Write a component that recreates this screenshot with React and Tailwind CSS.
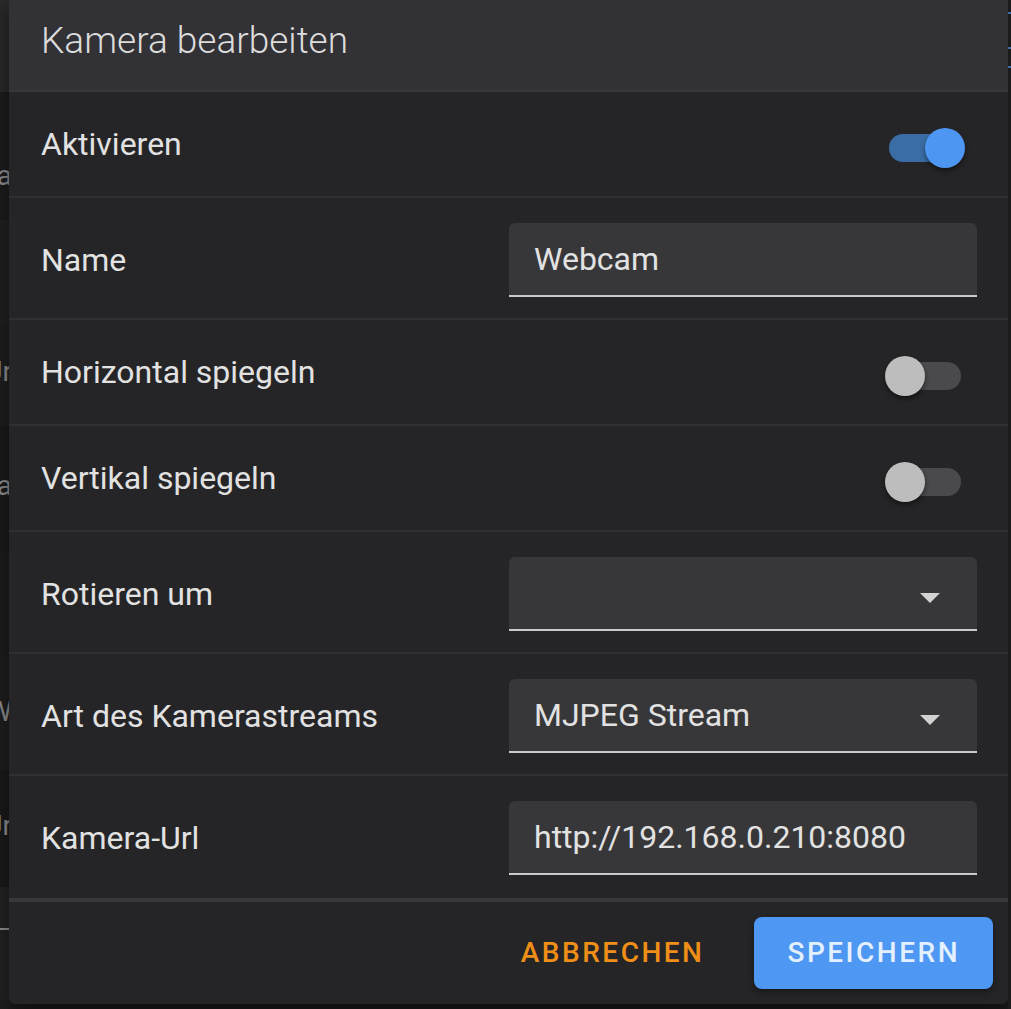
import { useState } from "react";

const bgRows = [
  { h: "h-[92px]", bg: "bg-[#29292a]", pt: "pt-0", text: "" },
  { h: "h-[128px]", bg: "bg-[#1c1c1d]", pt: "pt-[70px]", text: "Ma" },
  { h: "h-[105px]", bg: "bg-[#202021]", pt: "pt-0", text: "" },
  { h: "h-[100px]", bg: "bg-[#1e1e1f]", pt: "pt-[33px]", text: "Ur" },
  { h: "h-[127px]", bg: "bg-[#1a1a1b]", pt: "pt-[47px]", text: "Da" },
  { h: "h-[105px]", bg: "bg-[#1d1d1e]", pt: "pt-0", text: "" },
  { h: "h-[113px]", bg: "bg-[#1e1e1f]", pt: "pt-[41px]", text: "W" },
  { h: "h-[117px]", bg: "bg-[#1a1a1b]", pt: "pt-[42px]", text: "Ur" },
  { h: "h-[113px]", bg: "bg-[#222223]", pt: "pt-[29px]", text: "–" },
  { h: "h-[9px]", bg: "bg-[#1e1e1f]", pt: "pt-0", text: "" },
];

const Switch = ({ on, onToggle }) => {
  return (
    <button
      onClick={onToggle}
      className={`relative mt-[8px] mr-[16px] h-[28px] w-[72px] rounded-full ${
        on ? "bg-[#3a6da5]" : "bg-[#4a4a4d]"
      }`}
    >
      <span
        className={`absolute top-[-6px] h-[40px] w-[40px] rounded-full shadow-[0_3px_5px_rgba(0,0,0,0.45)] ${
          on ? "right-[-4px] bg-[#4d96f2]" : "left-[-4px] bg-[#bdbdbd]"
        }`}
      />
    </button>
  );
};

const Arrow = () => (
  <svg width="20" height="10" viewBox="0 0 20 10" className="mt-[10px] mr-[37px] shrink-0">
    <path d="M0 0 L20 0 L10 10 Z" fill="#d2d2d2" />
  </svg>
);

const Field = ({ value, select }) => (
  <div className="flex h-[74px] items-center justify-between rounded-t-[6px] border-b-2 border-[#cacaca] bg-[#373739] pl-[25px]">
    <span className="whitespace-nowrap text-[32px] text-[#e2e2e2]">{value}</span>
    {select && <Arrow />}
  </div>
);

const Row = ({ label, children, tall, last }) => (
  <div
    className={`grid grid-cols-2 items-center pl-[32px] pr-[31px] ${
      tall ? "h-[122px] pt-[25px] pb-[23px]" : "h-[106px]"
    } ${last ? "" : "border-b-2 border-[#303033]"}`}
  >
    <span className="text-[32px] text-[#e2e2e2]">{label}</span>
    {children}
  </div>
);

const App = () => {
  const [active, setActive] = useState(true);
  const [flipH, setFlipH] = useState(false);
  const [flipV, setFlipV] = useState(false);

  return (
    <div className="flex h-[1009px] w-[1011px] overflow-hidden bg-[#1b1b1c] font-['Roboto',sans-serif]">
      <div className="flex w-[9px] shrink-0 flex-col">
        {bgRows.map((row, i) => (
          <div
            key={i}
            className={`flex shrink-0 items-start justify-end overflow-hidden ${row.h} ${row.bg} ${row.pt}`}
          >
            <span className="mr-[-3px] whitespace-nowrap text-[28px] leading-[28px] text-[#8e8e90]">
              {row.text}
            </span>
          </div>
        ))}
      </div>

      <div className="flex h-[1004px] w-[999px] shrink-0 flex-col rounded-b-[6px] bg-[#252527] shadow-[0_8px_20px_rgba(0,0,0,0.5)]">
        <div className="flex h-[92px] items-center border-b-2 border-[#38383b] bg-[#323236] px-[32px] pb-[8px]">
          <h1 className="text-[37px] font-light text-[#dcdcdc]">Kamera bearbeiten</h1>
        </div>

        <Row label="Aktivieren">
          <div className="flex justify-end">
            <Switch on={active} onToggle={() => setActive(!active)} />
          </div>
        </Row>
        <Row label="Name" tall>
          <Field value="Webcam" />
        </Row>
        <Row label="Horizontal spiegeln">
          <div className="flex justify-end">
            <Switch on={flipH} onToggle={() => setFlipH(!flipH)} />
          </div>
        </Row>
        <Row label="Vertikal spiegeln">
          <div className="flex justify-end">
            <Switch on={flipV} onToggle={() => setFlipV(!flipV)} />
          </div>
        </Row>
        <Row label="Rotieren um" tall>
          <Field value="" select />
        </Row>
        <Row label="Art des Kamerastreams" tall>
          <Field value="MJPEG Stream" select />
        </Row>
        <Row label="Kamera-Url" tall last>
          <Field value="http://192.168.0.210:8080" />
        </Row>

        <div className="h-[4px] bg-[#39393c]" />
        <div className="flex flex-1 items-center justify-end gap-[17px] pr-[15px]">
          <button className="h-[72px] rounded-[8px] px-[33px] text-[28px] font-medium tracking-[2.5px] text-[#ef8f18]">
            ABBRECHEN
          </button>
          <button className="h-[72px] rounded-[8px] bg-[#4e97f2] px-[33px] text-[28px] font-medium tracking-[2.5px] text-[#e4f0fd] shadow-[0_3px_6px_rgba(0,0,0,0.4)]">
            SPEICHERN
          </button>
        </div>
      </div>

      <div className="flex w-[3px] shrink-0 flex-col bg-[#1b1b1c]">
        <div className="mt-[12px] h-[2px] bg-[#3d6ea5]" />
        <div className="mt-[33px] h-[2px] bg-[#3d6ea5]" />
        <div className="mt-[17px] h-[2px] bg-[#3d6ea5]" />
      </div>
    </div>
  );
};

export default App;
